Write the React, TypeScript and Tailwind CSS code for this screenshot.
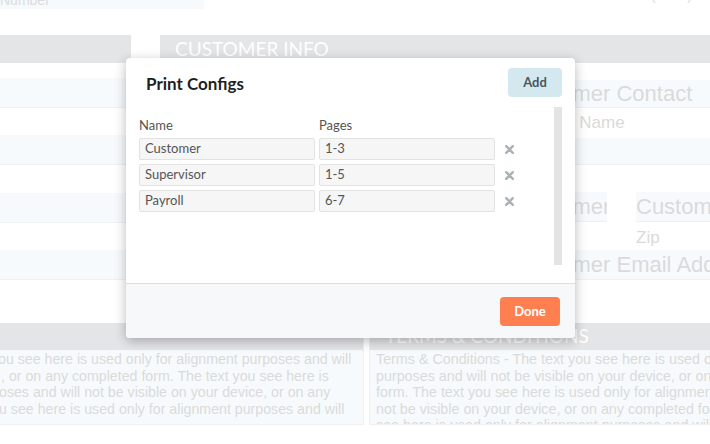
import React from "react";

function XIcon() {
  return (
    <svg width="9" height="9" viewBox="0 0 9 9" className="block">
      <path d="M1.2 1.2 L7.8 7.8 M7.8 1.2 L1.2 7.8" stroke="#a8b2b9" strokeWidth="2.4" strokeLinecap="round" />
    </svg>
  );
}

const rows = [
  { name: "Customer", pages: "1-3" },
  { name: "Supervisor", pages: "1-5" },
  { name: "Payroll", pages: "6-7" },
];

export default function App() {
  const arial = { fontFamily: '"Liberation Sans", Arial, sans-serif' };
  const lato = { fontFamily: 'Lato, "Open Sans", sans-serif' };
  return (
    <div className="relative w-[710px] h-[444px] overflow-hidden bg-white" style={arial}>
      {/* top strip */}
      <div className="h-[35px] flex items-start justify-between overflow-hidden">
        <div className="w-[204px] shrink-0 h-[9px] bg-[#f6fafc] overflow-hidden">
          <div className="text-[14px] leading-[14px] -mt-[7px] text-[#dcdcdc]">Number</div>
        </div>
        <div className="text-[14px] leading-[14px] -mt-[12px] mr-[10px] text-[#dcdcdc] tracking-[8px]">(..)</div>
      </div>

      {/* middle section */}
      <div className="flex h-[248px]">
        <div className="w-[131px] shrink-0 flex flex-col">
          <div className="h-[28px] bg-[#e4e5e7]"></div>
          <div className="h-[15px]"></div>
          <div className="h-[30px] bg-[#f6fafc] border-b border-[#eef1f3]"></div>
          <div className="h-[27px]"></div>
          <div className="h-[30px] bg-[#f6fafc] border-b border-[#eef1f3]"></div>
          <div className="h-[28px]"></div>
          <div className="h-[30px] bg-[#f6fafc] border-b border-[#eef1f3]"></div>
          <div className="h-[27px]"></div>
          <div className="h-[30px] bg-[#f6fafc] border-b border-[#eef1f3]"></div>
        </div>
        <div className="flex-1 min-w-0 overflow-hidden ml-[29px] flex flex-col">
          <div className="h-[28px] bg-[#e4e5e7] pl-[15px] flex items-center text-white text-[19px]" style={lato}>
            CUSTOMER INFO
          </div>
          <div className="pl-[355px] flex flex-col">
            <div className="h-[17px]"></div>
            <div className="h-[28px] bg-[#f6fafc] flex items-center text-[22px] text-[#dadada] whitespace-nowrap border-b border-[#eef1f3]">
              Customer Contact
            </div>
            <div className="h-[30px] flex items-center text-[17px] text-[#dadada] whitespace-nowrap pl-[1px]">Contact Name</div>
            <div className="h-[27px] bg-[#f6fafc] border-b border-[#eef1f3]"></div>
            <div className="h-[27px]"></div>
            <div className="h-[30px] flex gap-[29px]">
              <div className="w-[92px] shrink-0 bg-[#f6fafc] flex items-center text-[22px] text-[#dadada] whitespace-nowrap overflow-hidden border-b border-[#eef1f3]">
                Customer
              </div>
              <div className="flex-1 min-w-0 bg-[#f6fafc] flex items-center text-[22px] text-[#dadada] whitespace-nowrap overflow-hidden border-b border-[#eef1f3]">
                Customer City
              </div>
            </div>
            <div className="h-[28px] flex">
              <div className="w-[121px] shrink-0"></div>
              <div className="flex items-center text-[17px] text-[#dadada] pt-[4px]">Zip</div>
            </div>
            <div className="h-[30px] bg-[#f6fafc] flex items-center text-[22px] text-[#dadada] whitespace-nowrap overflow-hidden border-b border-[#eef1f3]">
              Customer Email Address
            </div>
          </div>
        </div>
      </div>

      {/* bottom section */}
      <div className="mt-[40px] flex h-[102px]">
        <div className="w-[364px] shrink-0 flex flex-col border-r border-[#eef1f3]">
          <div className="h-[27px] bg-[#e4e5e7]"></div>
          <div className="flex-1 bg-[#f6fafc] overflow-hidden text-[14.2px] leading-[16.5px] text-[#dadada] whitespace-nowrap pt-[1px] border-b border-[#eef1f3]">
            <div className="-ml-[2px]">ou see here is used only for alignment purposes and will</div>
            <div className="ml-[1px]">, or on any completed form. The text you see here is</div>
            <div className="-ml-[1px]">oses and will not be visible on your device, or on any</div>
            <div className="-ml-[1px]">u see here is used only for alignment purposes and will</div>
          </div>
        </div>
        <div className="flex-1 min-w-0 overflow-hidden ml-[5px] flex flex-col border-l border-[#eef1f3]">
          <div className="h-[27px] bg-[#e4e5e7] pl-[15px] flex items-center text-white text-[19px] whitespace-nowrap" style={lato}>
            TERMS &amp; CONDITIONS
          </div>
          <div className="flex-1 bg-[#f6fafc] overflow-hidden text-[14.3px] leading-[16.5px] text-[#dadada] whitespace-nowrap pl-[6px] pt-[1px] border-b border-[#eef1f3]">
            <div>Terms &amp; Conditions - The text you see here is used only for alignment</div>
            <div>purposes and will not be visible on your device, or on any completed</div>
            <div>form. The text you see here is used only for alignment purposes and will</div>
            <div>not be visible on your device, or on any completed form. The text you</div>
            <div>see here is used only for alignment purposes and will not be visible</div>
          </div>
        </div>
      </div>

      {/* modal */}
      <div
        className="absolute left-[126px] top-[58px] w-[449px] h-[280px] bg-white rounded-[4px] shadow-[0_3px_12px_rgba(0,0,0,0.28)] flex flex-col"
        style={lato}
      >
        <div className="h-[39px] flex items-start justify-between pl-[20px] pr-[13px] pt-[10px]">
          <div className="text-[17px] font-bold text-[#1f1f1f] leading-[29px] pt-[1px]">Print Configs</div>
          <button className="w-[54px] h-[29px] rounded-[4px] bg-[#d4e9ef] text-[13px] font-bold text-[#4a555e]">Add</button>
        </div>
        <div className="mt-[10px] mx-[13px] h-[158px] flex">
          <div className="flex-1 pt-[10px]">
            <div className="flex text-[13px] text-[#555] leading-[17px] mb-[4px]">
              <div className="w-[180px]">Name</div>
              <div>Pages</div>
            </div>
            <div className="flex flex-col gap-[4px]">
              {rows.map((r) => (
                <div key={r.name} className="flex items-center">
                  <div className="w-[176px] h-[22px] bg-[#f6f6f6] border border-[#e2e2e2] rounded-[2px] pl-[5px] flex items-center text-[13px] text-[#555]">
                    {r.name}
                  </div>
                  <div className="ml-[4px] w-[176px] h-[22px] bg-[#f6f6f6] border border-[#e2e2e2] rounded-[2px] pl-[5px] flex items-center text-[13px] text-[#555]">
                    {r.pages}
                  </div>
                  <div className="ml-[10px]">
                    <XIcon />
                  </div>
                </div>
              ))}
            </div>
          </div>
          <div className="w-[8px] bg-[#e4e4e4]"></div>
        </div>
        <div className="mt-[18px] flex-1 bg-[#f7f8fa] border-t border-[#dedfe1] rounded-b-[4px] flex items-start justify-end pr-[15px] pt-[13px]">
          <button className="w-[60px] h-[29px] rounded-[4px] bg-[#ff7f50] text-white text-[13px] font-bold">Done</button>
        </div>
      </div>
    </div>
  );
}
